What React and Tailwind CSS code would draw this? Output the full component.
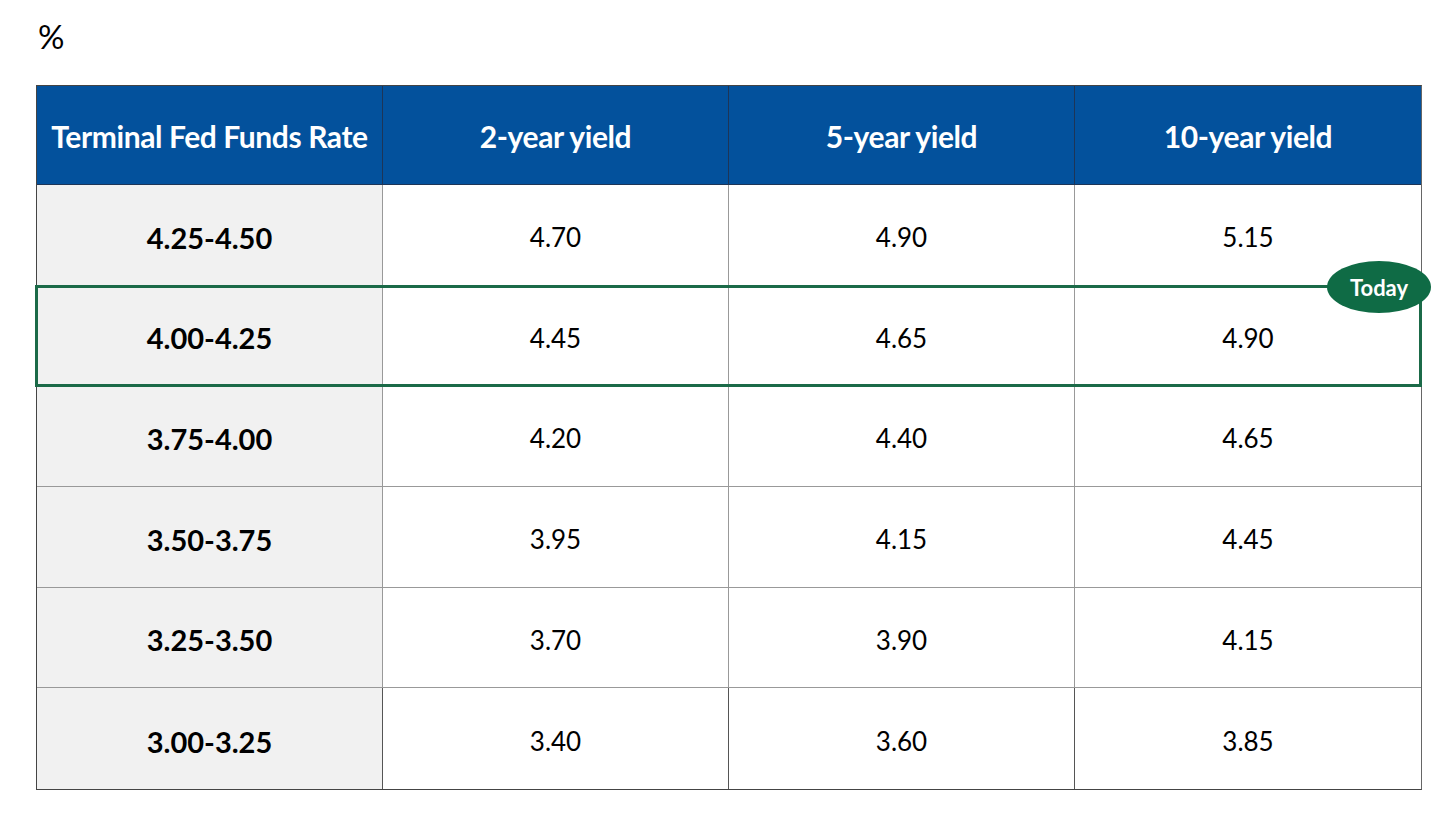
const rows = [
  ["4.25-4.50", "4.70", "4.90", "5.15"],
  ["4.00-4.25", "4.45", "4.65", "4.90"],
  ["3.75-4.00", "4.20", "4.40", "4.65"],
  ["3.50-3.75", "3.95", "4.15", "4.45"],
  ["3.25-3.50", "3.70", "3.90", "4.15"],
  ["3.00-3.25", "3.40", "3.60", "3.85"],
]

const headers = ["Terminal Fed Funds Rate", "2-year yield", "5-year yield", "10-year yield"]

export default function App() {
  return (
    <div className="w-[1440px] h-[835px] bg-white font-['Lato',sans-serif] text-black">
      <div className="pl-[38px] pt-[16px] h-[85px] text-[33px] leading-[40px]">%</div>
      <div className="relative ml-[36px] w-[1386px]">
        <div className="grid grid-cols-4 border border-[#444] border-r-[#666]">
          {headers.map((h, i) => (
            <div
              key={h}
              className={`h-[99px] bg-[#03519c] flex items-center justify-center pt-[2px] text-white text-[30px] font-bold tracking-[-0.4px] border-b border-[#1d3557] ${i < 3 ? "border-r border-[#1a2a44]" : ""}`}
            >
              {h}
            </div>
          ))}
          {rows.map((r, ri) =>
            r.map((c, ci) => (
              <div
                key={ri + "-" + ci}
                className={`h-[100.7px] flex items-center justify-center pt-[5px] ${ci === 0 ? "bg-[#f1f1f1] font-bold text-[29px]" : "bg-white text-[26px]"} ${ci < 3 ? "border-r border-[#555]" : ""} ${ri < 5 ? "border-b border-[#999]" : ""}`}
              >
                {c}
              </div>
            ))
          )}
        </div>
        <div className="absolute left-[-1px] top-[200px] w-[1387px] h-[102px] border-[3px] border-[#1b6a48] pointer-events-none" />
        <div className="absolute left-[1291px] top-[176px] w-[104px] h-[52px] rounded-[50%] bg-[#0f6b45] flex items-center justify-center text-white text-[22px] font-bold">
          Today
        </div>
      </div>
    </div>
  )
}
